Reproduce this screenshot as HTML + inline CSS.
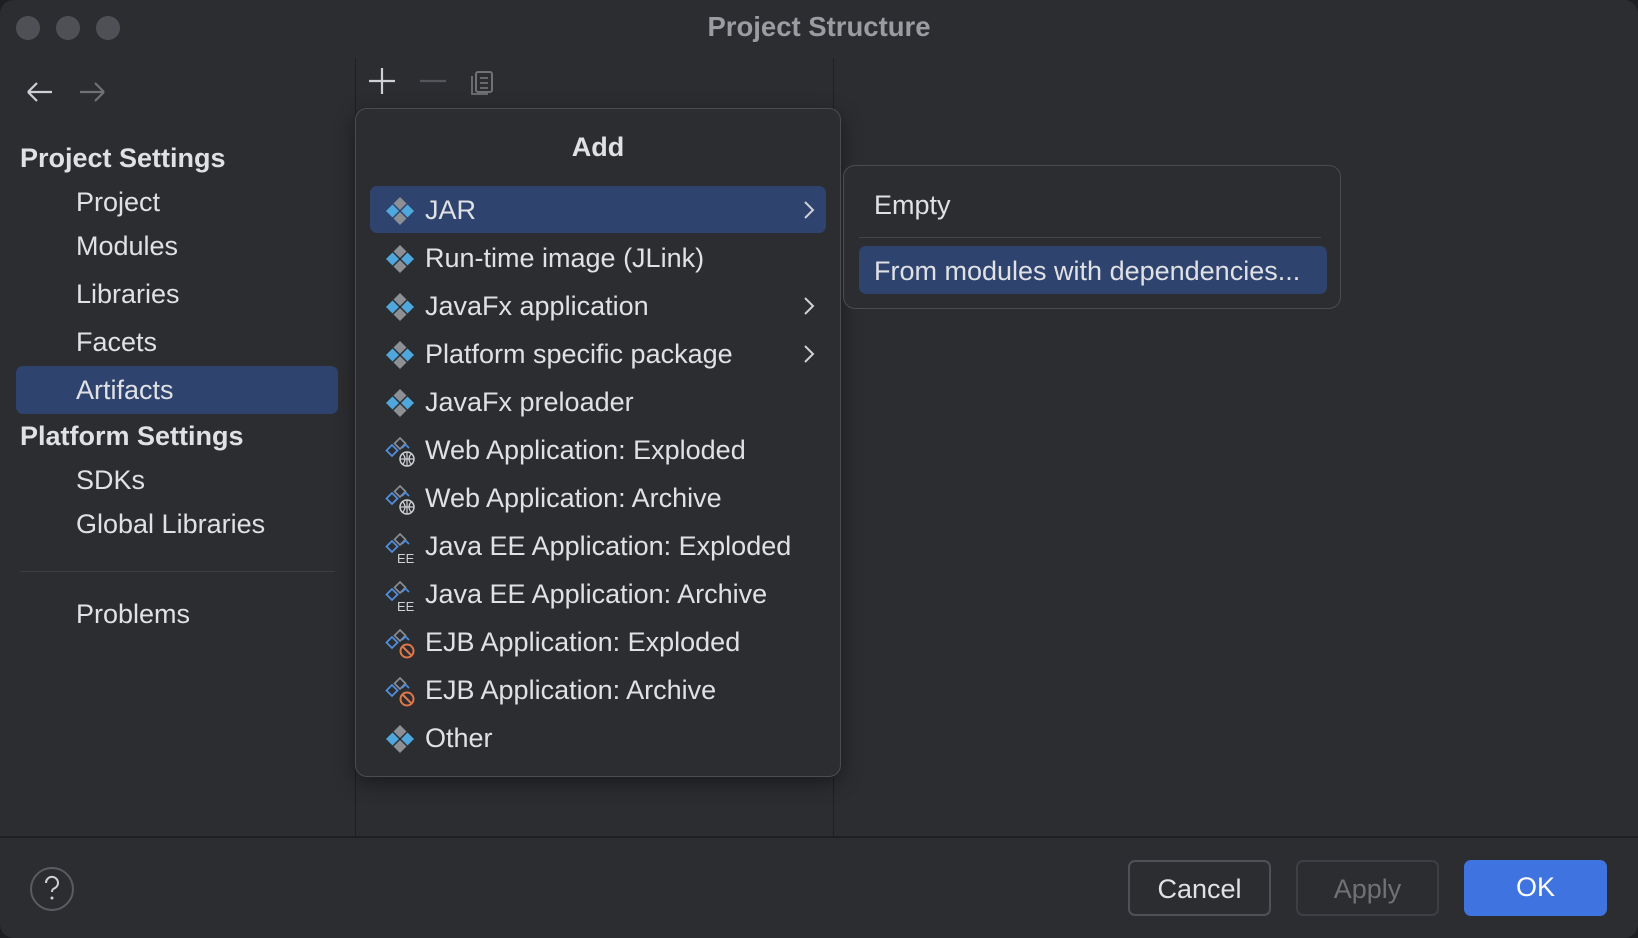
<!DOCTYPE html>
<html><head><meta charset="utf-8"><style>
*{margin:0;padding:0;box-sizing:border-box}
body{width:1638px;height:938px;background:#1e1f22;font-family:"Liberation Sans",sans-serif;color:#dfe1e5;overflow:hidden;position:relative}
.win{position:absolute;left:0;top:0;width:1638px;height:938px;background:#2b2d30;border-radius:14px;overflow:hidden}
.t{position:absolute;white-space:nowrap;line-height:1}
.dot{position:absolute;width:24px;height:24px;border-radius:50%;background:#4e5055;top:16px}
.side{font-size:27px}
.hdr{font-size:27px;font-weight:bold}
.popup{position:absolute;left:355px;top:108px;width:486px;height:669px;background:#2b2d30;border:1px solid #4a4c51;border-radius:12px;box-shadow:0 6px 20px rgba(0,0,0,.4)}
.row{position:absolute;left:14px;width:456px;height:47px;border-radius:7px}
.row .ic{position:absolute;left:15px;top:10px}
.row .tx{position:absolute;left:55px;top:9px;font-size:27px;white-space:nowrap}
.row .ch{position:absolute;right:10px;top:13px}
.btn{position:absolute;top:860px;width:143px;height:56px;border-radius:7px;font-size:27px;text-align:center;line-height:54px}
</style></head><body><div class="win">
<div class="dot" style="left:16px"></div><div class="dot" style="left:56px"></div><div class="dot" style="left:96px"></div>
<div class="t" style="left:0;width:1638px;text-align:center;top:13px;font-size:27.5px;font-weight:bold;color:#9a9ca1">Project Structure</div>
<svg style="position:absolute;left:26px;top:80px" width="80" height="24"><path d="M2 12H26M2 12L11 3M2 12L11 21" stroke="#ced0d6" stroke-width="2.2" fill="none"/><path d="M54 12H78M78 12L69 3M78 12L69 21" stroke="#6f7175" stroke-width="2.2" fill="none"/></svg>
<div style="position:absolute;left:355px;top:58px;width:1px;height:778px;background:#1e1f22"></div>
<div style="position:absolute;left:833px;top:58px;width:1px;height:778px;background:#1e1f22"></div>
<div style="position:absolute;left:0;top:836px;width:1638px;height:2px;background:#1e1f22"></div>
<svg style="position:absolute;left:366px;top:66px" width="140" height="30"><path d="M3 15H29M16 2V28" stroke="#ced0d6" stroke-width="2.2"/><path d="M54 15H80" stroke="#55575c" stroke-width="2.2"/><rect x="110" y="6" width="16" height="20" rx="2" stroke="#6f7175" stroke-width="2" fill="none"/><path d="M106 10V28H122M114 12H122M114 17H122M114 22H122" stroke="#6f7175" stroke-width="1.8" fill="none"/></svg>
<div class="t hdr" style="left:20px;top:145px">Project Settings</div>
<div class="t side" style="left:76px;top:189px">Project</div>
<div class="t side" style="left:76px;top:233px">Modules</div>
<div class="t side" style="left:76px;top:281px">Libraries</div>
<div class="t side" style="left:76px;top:329px">Facets</div>
<div style="position:absolute;left:16px;top:366px;width:322px;height:48px;border-radius:7px;background:#2e436e"></div>
<div class="t side" style="left:76px;top:377px">Artifacts</div>
<div class="t hdr" style="left:20px;top:423px">Platform Settings</div>
<div class="t side" style="left:76px;top:467px">SDKs</div>
<div class="t side" style="left:76px;top:511px">Global Libraries</div>
<div style="position:absolute;left:20px;top:571px;width:315px;height:1px;background:#3c3e42"></div>
<div class="t side" style="left:76px;top:601px">Problems</div>
<div class="popup">
<div class="t" style="left:0;width:484px;text-align:center;top:25px;font-size:27px;font-weight:bold">Add</div>
<div id="rows"></div>
</div>
<div style="position:absolute;left:843px;top:165px;width:498px;height:144px;background:#2b2d30;border:1px solid #4a4c51;border-radius:12px">
<div class="t" style="left:30px;top:26px;font-size:27px">Empty</div>
<div style="position:absolute;left:15px;top:71px;width:462px;height:1px;background:#43454a"></div>
<div style="position:absolute;left:15px;top:80px;width:468px;height:48px;border-radius:7px;background:#2e436e"></div>
<div class="t" style="left:30px;top:92px;font-size:27px">From modules with dependencies...</div>
</div>
<svg style="position:absolute;left:29px;top:866px" width="46" height="46"><circle cx="23" cy="23" r="21" stroke="#5a5c61" stroke-width="2" fill="none"/><path d="M17 17a6 6 0 1 1 8 5.5c-1.5.7-2 1.7-2 3.5" stroke="#ced0d6" stroke-width="2" fill="none"/><circle cx="23" cy="32" r="1.5" fill="#ced0d6"/></svg>
<div class="btn" style="left:1128px;border:2px solid #4e5157">Cancel</div>
<div class="btn" style="left:1296px;border:2px solid #3d3f44;color:#6f7175">Apply</div>
<div class="btn" style="left:1464px;background:#3f74e0;color:#fff">OK</div>
</div>
<script>
var items=[["JAR",1,"d"],["Run-time image (JLink)",0,"d"],["JavaFx application",1,"d"],["Platform specific package",1,"d"],["JavaFx preloader",0,"d"],["Web Application: Exploded",0,"w"],["Web Application: Archive",0,"w"],["Java EE Application: Exploded",0,"e"],["Java EE Application: Archive",0,"e"],["EJB Application: Exploded",0,"j"],["EJB Application: Archive",0,"j"],["Other",0,"d"]];
function icon(t){
 if(t=="d")return '<svg width="30" height="30"><path d="M15 1l6.5 6.5-6.5 6.5-6.5-6.5z" fill="#8c8f94"/><path d="M15 16l6.5 6.5-6.5 6.5-6.5-6.5z" fill="#8c8f94"/><path d="M7.5 8.5l6.5 6.5-6.5 6.5-6.5-6.5z" fill="#4fa7dc"/><path d="M22.5 8.5l6.5 6.5-6.5 6.5-6.5-6.5z" fill="#4fa7dc"/></svg>';
 var base='<svg width="32" height="32"><path d="M15 2l5.5 5.5-5.5 5.5-5.5-5.5z" fill="none" stroke="#8c8f94" stroke-width="1.6"/><path d="M7 9l5.5 5.5-5.5 5.5-5.5-5.5z" fill="none" stroke="#4f8fe0" stroke-width="1.8"/><path d="M17 12l3.5-3.5 3.5 3.5" fill="none" stroke="#4f8fe0" stroke-width="1.6"/>';
 if(t=="w")base+='<circle cx="22" cy="23" r="7" fill="none" stroke="#ced0d6" stroke-width="1.5"/><path d="M15 23h14M22 16v14M18 18q4 5 0 10M26 18q-4 5 0 10" stroke="#ced0d6" stroke-width="1.2" fill="none"/>';
 if(t=="e")base+='<text x="12" y="31" font-size="13" fill="#ced0d6" font-family="Liberation Sans">EE</text>';
 if(t=="j")base+='<circle cx="22" cy="23" r="6.5" fill="none" stroke="#e0774a" stroke-width="2"/><path d="M17.5 18.5l9 9" stroke="#e0774a" stroke-width="2"/>';
 return base+'</svg>';
}
var h='';items.forEach(function(it,i){var top=77+i*48;
h+='<div class="row" style="top:'+top+'px;'+(i==0?'background:#2e436e':'')+'"><div class="ic">'+icon(it[2])+'</div><div class="tx">'+it[0]+'</div>'+(it[1]?'<svg class="ch" width="14" height="22"><path d="M3 3l8 8-8 8" stroke="#ced0d6" stroke-width="2" fill="none"/></svg>':'')+'</div>';});
document.getElementById('rows').innerHTML=h;
</script>
</body></html>
